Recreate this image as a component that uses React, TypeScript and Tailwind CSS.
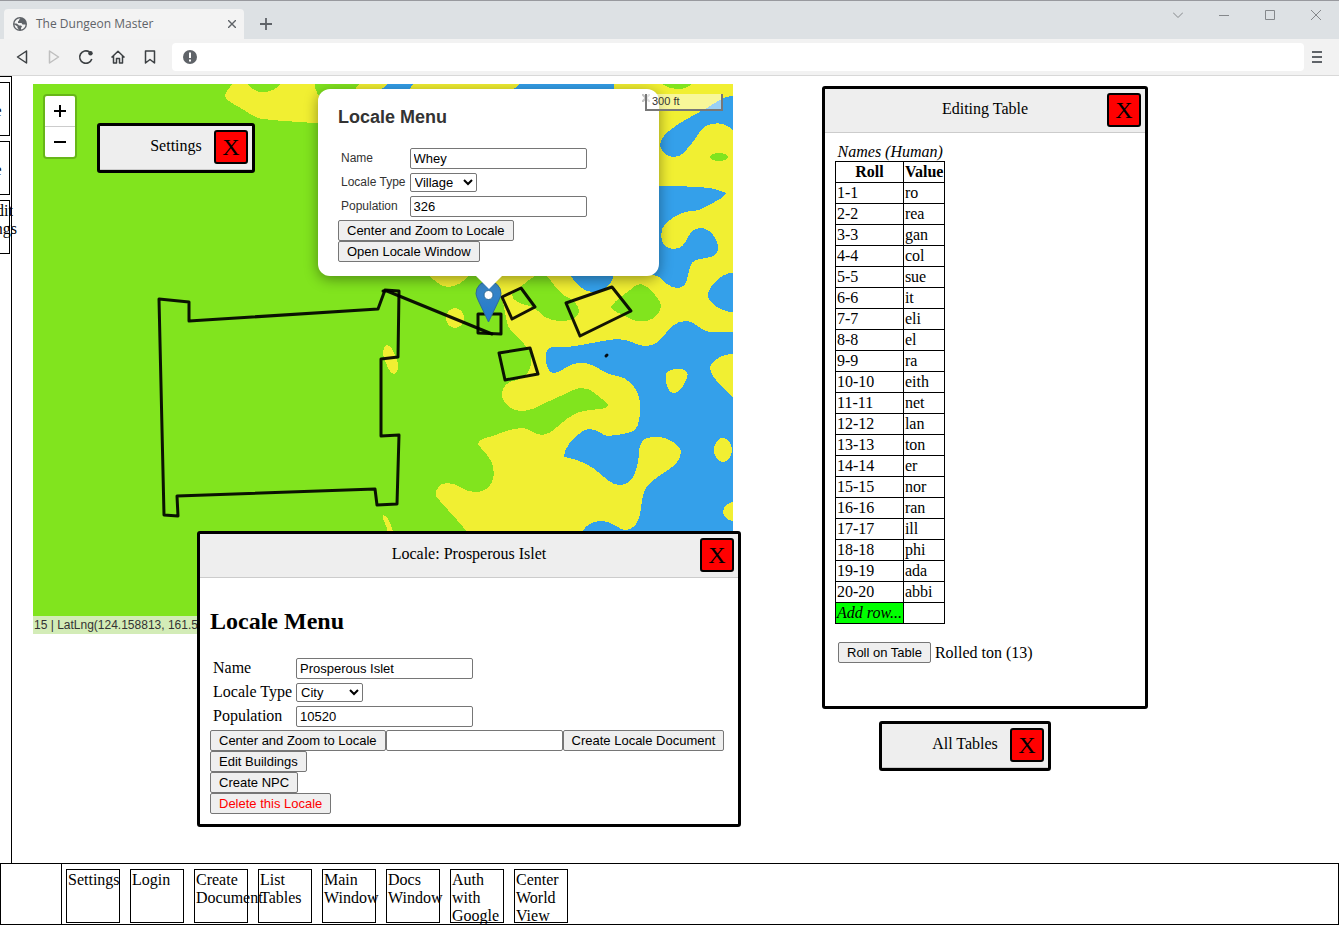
import type { ReactNode } from "react";
import clsx from "clsx";

const SANS = "font-['Liberation_Sans',Arial,sans-serif]";
const SERIF = "font-['Liberation_Serif','Times_New_Roman',serif]";

const tableRows = ["ro", "rea", "gan", "col", "sue", "it", "eli", "el", "ra", "eith", "net", "lan", "ton", "er", "nor", "ran", "ill", "phi", "ada", "abbi"];

const bottomButtons = ["Settings", "Login", "Create Document", "List Tables", "Main Window", "Docs Window", "Auth with Google", "Center World View"];

/* ---------- form controls ---------- */

function Button({ children, danger = false }: { children: ReactNode; danger?: boolean }) {
  return (
    <button
      type="button"
      className={clsx(
        "h-[21px] rounded-[2px] border border-[#767676] bg-[#efefef] px-2 text-[13px] leading-4 whitespace-nowrap",
        SANS,
        danger ? "text-[#f00]" : "text-black",
      )}
    >
      {children}
    </button>
  );
}

function TextBox({ id, value, label }: { id: string; value: string; label?: string }) {
  return (
    <input
      id={id}
      type="text"
      aria-label={label}
      defaultValue={value}
      className={clsx("block h-[21px] w-[177px] rounded-[2px] border border-[#767676] bg-white px-[3px] text-[13px] text-black", SANS)}
    />
  );
}

interface LocaleFormProps {
  id: string;
  name: string;
  type: string;
  population: string;
}

function LocaleForm({ id, name, type, population }: LocaleFormProps) {
  return (
    <div className="grid grid-cols-[max-content_max-content] auto-rows-[24px] items-center gap-x-1 pl-[3px]">
      <label htmlFor={id + "-name"}>Name</label>
      <TextBox id={id + "-name"} value={name} />
      <label htmlFor={id + "-type"}>Locale Type</label>
      <select
        id={id + "-type"}
        defaultValue={type}
        className={clsx("h-[19px] w-[67px] rounded-[2px] border border-[#767676] bg-white text-[13px] text-black", SANS)}
      >
        <option>City</option>
        <option>Town</option>
        <option>Village</option>
      </select>
      <label htmlFor={id + "-pop"}>Population</label>
      <TextBox id={id + "-pop"} value={population} />
    </div>
  );
}

/* ---------- windows ---------- */

function Window({ title, className, children }: { title: string; className: string; children?: ReactNode }) {
  return (
    <section className={clsx("absolute rounded-[3px] border-[3px] border-black bg-white text-base leading-[18px]", className)}>
      <header className="grid h-11 grid-cols-[34px_1fr_34px] items-start border-b border-[#ccc] bg-[#eee] px-1 pt-1">
        <h1 className="col-start-2 pt-[7px] text-center whitespace-nowrap">{title}</h1>
        <button type="button" aria-label={"Close " + title} className="h-[34px] w-[34px] rounded-[3px] border-2 border-black bg-[#f00] text-2xl leading-none">
          X
        </button>
      </header>
      {children}
    </section>
  );
}

function LocaleWindow() {
  return (
    <Window title="Locale: Prosperous Islet" className="top-[455px] left-[197px] w-[544px]">
      <div className="px-[10px] pt-[30px] pb-[10px]">
        <h2 className="mb-[21px] text-2xl leading-[27px] font-bold">Locale Menu</h2>
        <LocaleForm id="islet" name="Prosperous Islet" type="City" population="10520" />
        <div className="mt-[2px] flex flex-col items-start">
          <div className="flex">
            <Button>Center and Zoom to Locale</Button>
            <TextBox id="islet-doc" value="" label="Document name" />
            <Button>Create Locale Document</Button>
          </div>
          <Button>Edit Buildings</Button>
          <Button>Create NPC</Button>
          <Button danger>Delete this Locale</Button>
        </div>
      </div>
    </Window>
  );
}

function TableWindow() {
  return (
    <Window title="Editing Table" className="top-[10px] left-[822px] w-[326px]">
      <div className="px-[10px] pt-[10px] pb-[43px]">
        <table className="border-collapse">
          <caption className="text-center whitespace-nowrap italic">Names (Human)</caption>
          <thead>
            <tr className="h-[21px]">
              <th className="border border-black px-px">Roll</th>
              <th className="border border-black px-px">Value</th>
            </tr>
          </thead>
          <tbody>
            {tableRows.map((value, i) => (
              <tr key={value} className="h-[21px]">
                <td className="border border-black px-px">{`${i + 1}-${i + 1}`}</td>
                <td className="border border-black px-px">{value}</td>
              </tr>
            ))}
            <tr className="h-[21px]">
              <td className="border border-black bg-[#0f0] px-px whitespace-nowrap italic">Add row...</td>
              <td className="border border-black" />
            </tr>
          </tbody>
        </table>
        <div className="mt-[18px] flex items-center gap-1 pl-[3px]">
          <Button>Roll on Table</Button>
          <span>Rolled ton (13)</span>
        </div>
      </div>
    </Window>
  );
}

/* ---------- map ---------- */

function Terrain() {
  return (
    <svg viewBox="33 84 700 550" className="block h-full w-full">
      <defs>
        <linearGradient id="pin" x1="0" y1="0" x2="0" y2="1">
          <stop offset="0" stopColor="#3d88c4" />
          <stop offset="1" stopColor="#2078cf" />
        </linearGradient>
      </defs>
      <rect x="33" y="84" width="700" height="550" fill="#81e41e" />
      <g shapeRendering="crispEdges">
        {/* sand */}
        <g fill="#f1ef32">
          <path d="M232 84C229 89 225 92 225 96C225 101 240 107 247 112C252 115 257 119 263 119C280 121 300 122 330 124L420 265C430 276 438 287 448 287C457 287 464 281 468 276L490 276L496 290C504 298 504 310 507 322C508 328 511 331 513 333C518 338 524 343 526 347C533 352 532 360 530 368C528 375 520 380 513 381C505 383 502 389 502 395C502 403 512 411 522 411C530 411 537 407 543 404L567 393C573 390 578 388 582 388C592 388 597 396 607 403C610 407 604 409 600 409C587 410 580 411 573 415C560 422 553 434 542 435C535 435 530 428 522 428C510 429 500 433 493 436C484 438 478 440 478 444C482 450 488 455 491 461C494 468 495 474 492 482C488 490 482 492 475 492C463 492 458 483 447 483C439 483 435 490 436 496C440 502 458 520 467 532L740 560V84Z" />
          <ellipse cx="455" cy="318" rx="9" ry="10" />
          <path d="M387 345C383 347 382 354 384 358C387 366 390 374 394 374C398 373 399 367 398 363C395 355 392 345 387 345Z" />
          <path d="M383 515C381 518 388 526 388 534H394C391 525 388 515 383 515Z" />
        </g>
        {/* grass */}
        <g fill="#81e41e">
          <path d="M247 84C252 90 257 92 263 92C271 92 276 89 280 84Z" />
          <path d="M315 84C314 89 319 98 325 104L353 92L359 84Z" />
          <path d="M662 84C668 88 674 89 679 89C684 89 688 87 692 84Z" />
          <ellipse cx="719" cy="157" rx="9" ry="4" />
          <path d="M535 276C528 280 515 291 512 295C512 300 520 304 526 305C534 306 540 313 545 317C551 320 558 322 565 321C573 320 580 315 579 311C578 303 572 299 565 296C558 292 551 280 547 276Z" />
          <path d="M611 307C615 300 625 294 630 290C635 285 640 283 643 285C650 287 656 296 660 302C663 307 659 314 654 318C646 323 635 322 629 318C622 314 613 312 611 307Z" />
        </g>
        {/* water */}
        <g fill="#34a0ea">
          <path d="M388 84L378 92H408L413 84Z" />
          <path d="M520 84L510 92H614V84Z" />
          <path d="M733 96C724 96 720 100 715 103C704 110 690 117 680 123C670 130 660 136 660 145C661 153 668 157 674 157C682 157 685 151 692 143C697 138 699 130 706 126C714 122 725 122 733 130Z" />
          <path d="M640 185C670 186 690 186 710 188C718 190 726 192 726 194C722 199 712 203 705 207C697 213 692 209 682 213C670 218 661 225 661 235C661 245 667 249 674 249C690 248 685 229 700 228C711 228 718 240 718 248C718 259 706 257 696 260C690 262 690 268 688 275C687 284 683 288 678 288C670 288 664 282 659 277L640 270Z" />
          <path d="M570 275C576 283 583 292 592 292C602 292 611 288 614 275Z" />
          <path d="M733 273C722 272 708 287 708 295C708 303 722 312 733 312Z" />
          <path d="M546 360C545 351 547 347 555 347C574 349 594 341 617 339C630 339 637 346 645 346C664 347 666 322 685 321C696 321 700 332 713 332H733V540H578C582 528 590 521 600 521C614 521 618 530 626 530C645 527 638 502 646 488C655 474 681 468 681 452C680 444 667 437 657 437C646 437 640 439 639 452C638 468 634 485 620 485C604 485 600 463 565 457C561 456 570 438 583 431C595 425 600 435 608 436C617 435 627 434 634 431C640 425 640 415 640 405C640 390 630 382 624 378C617 375 610 376 601 370C595 366 590 363 581 363C567 363 562 373 553 373C549 373 546 366 546 360Z" />
        </g>
        {/* islands */}
        <g fill="#f1ef32">
          <path d="M666 373C670 369 675 369 680 369C686 369 689 373 687 378C684 385 680 393 674 393C667 393 665 380 666 373Z" />
          <path d="M733 354C724 354 710 360 710 369C711 378 724 388 733 397Z" />
          <ellipse cx="723" cy="450" rx="9" ry="12" />
          <path d="M733 502C727 503 723 508 723 512C723 516 728 521 733 521Z" />
        </g>
      </g>
      {/* town walls and buildings */}
      <g fill="none" stroke="#000" strokeOpacity=".92" strokeWidth="3" strokeLinejoin="round" strokeLinecap="round">
        <path d="M159 299L189 302V321L378 309L385 290L399 291L398 357L381 359V436L399 435L397 504L377 505L375 489L177 496L178 516L164 515Z" />
        <path d="M383 291L387 291L492 334" />
        <path d="M478 314H501V334L478 333Z" />
        <path d="M502 297L521 288L535 307L512 319Z" />
        <path d="M566 303L612 287L631 311L580 336Z" />
        <path d="M499 353L530 348L538 374L505 380Z" />
        <path d="M606 356L607 355" />
      </g>
      <path d="M488.500 322L478.500 301Q476 296 476 293.500A12.500 12.500 0 0 1 501 293.500Q501 296 498.500 301Z" fill="url(#pin)" stroke="#2e6c97" strokeWidth="1" />
      <circle cx="488.500" cy="295" r="4.500" fill="#fff" stroke="#2e6c97" strokeWidth="1" />
    </svg>
  );
}

function MapView() {
  return (
    <div className={clsx("absolute top-2 left-[33px] h-[550px] w-[700px] overflow-hidden text-[#333]", SANS)}>
      <Terrain />

      <div className="absolute top-[10px] left-[10px] rounded-[4px] border-2 border-black/20">
        <div className="flex w-[30px] flex-col overflow-hidden rounded-[2px] bg-white text-black">
          <button type="button" aria-label="Zoom in" className="flex h-[31px] items-center justify-center border-b border-[#ccc]">
            <svg viewBox="0 0 12 12" className="h-3 w-3" stroke="currentColor" strokeWidth="2"><path d="M6 0V12M0 6H12" /></svg>
          </button>
          <button type="button" aria-label="Zoom out" className="flex h-[30px] items-center justify-center">
            <svg viewBox="0 0 12 12" className="h-3 w-3" stroke="currentColor" strokeWidth="2"><path d="M0 6H12" /></svg>
          </button>
        </div>
      </div>

      <div className="absolute top-[5px] left-[285px] w-[341px]">
        <div className="relative rounded-xl bg-white px-5 pt-4 pb-[14px] text-xs shadow-[0_3px_14px_rgba(0,0,0,0.4)]">
          <button type="button" aria-label="Close popup" className="absolute top-[5px] right-[9px] text-[#c3c3c3]">
            <svg viewBox="0 0 8 8" className="h-2 w-2" stroke="currentColor" strokeWidth="2.200"><path d="M0 0L8 8M8 0L0 8" /></svg>
          </button>
          <h2 className="mb-[17px] text-lg leading-6 font-bold">Locale Menu</h2>
          <LocaleForm id="whey" name="Whey" type="Village" population="326" />
          <div className="mt-[2px] flex flex-col items-start">
            <Button>Center and Zoom to Locale</Button>
            <Button>Open Locale Window</Button>
          </div>
        </div>
        <svg viewBox="0 0 26 13" className="relative mx-auto block h-[13px] w-[26px]">
          <path d="M0 0H26L13 13Z" fill="#fff" />
        </svg>
      </div>

      <div className="absolute top-[10px] right-[10px] w-[78px] border-2 border-t-0 border-[#777] bg-white/50 px-[5px] text-[11px] leading-[15px]">300 ft</div>
      <div className="absolute bottom-0 left-0 bg-[#d3ecb7] px-px text-xs leading-[18px] whitespace-nowrap">15 | LatLng(124.158813, 161.542969)</div>
    </div>
  );
}

/* ---------- browser frame ---------- */

function BrowserFrame() {
  return (
    <div className="text-[#5f6368]">
      <div className="flex h-[39px] items-end border-t border-[#98999e] bg-[#dde1e4]">
        <div className="ml-1 flex h-[30px] w-60 items-center rounded-t-[4px] bg-[#f3f3f3] pr-2 pl-[9px]">
          <svg viewBox="0 0 14 14" className="mr-[9px] h-[14px] w-[14px]">
            <circle cx="7" cy="7" r="7" fill="#5f6368" />
            <path d="M7.500 1.500C6 2 6.500 3.500 5 4.500V6H8.500L9.500 7.500H12.500C12.500 10 10.500 12.300 8 12.500V11L9 9.500L8 8.500H6L5 7.500L3.500 6.500H1.500C1.700 3.500 4.500 1.200 7.500 1.500ZM1.500 7.500L4.500 9.500V11L6 12.500C3.500 12.200 1.600 10.200 1.500 7.500Z" fill="#f3f3f3" />
          </svg>
          <span className="flex-1 font-['Open_Sans','Noto_Sans',sans-serif] text-xs">The Dungeon Master</span>
          <button type="button" aria-label="Close tab">
            <svg viewBox="0 0 8 8" className="h-2 w-2" stroke="currentColor" strokeWidth="1.400"><path d="M0 0L8 8M8 0L0 8" /></svg>
          </button>
        </div>
        <button type="button" aria-label="New tab" className="mb-[9px] ml-4">
          <svg viewBox="0 0 12 12" className="h-3 w-3" stroke="currentColor" strokeWidth="1.800"><path d="M6 0V12M0 6H12" /></svg>
        </button>
        <div className="mr-[18px] mb-[19px] ml-auto flex gap-9 text-[#85888b]">
          <button type="button" aria-label="Tab list"><svg viewBox="0 0 10 10" className="h-[10px] w-[10px]" fill="none" stroke="currentColor"><path d="M0 2.500L5 7.500L10 2.500" /></svg></button>
          <button type="button" aria-label="Minimize"><svg viewBox="0 0 10 10" className="h-[10px] w-[10px]" stroke="currentColor"><path d="M0 5.500H10" /></svg></button>
          <button type="button" aria-label="Maximize"><svg viewBox="0 0 10 10" className="h-[10px] w-[10px]" fill="none" stroke="currentColor"><path d="M.5.500H9.500V9.500H.5Z" /></svg></button>
          <button type="button" aria-label="Close"><svg viewBox="0 0 10 10" className="h-[10px] w-[10px]" stroke="currentColor"><path d="M0 0L10 10M10 0L0 10" /></svg></button>
        </div>
      </div>
      <div className="flex h-[37px] items-center border-b border-[#d8d8d8] bg-[#f2f2f2] pr-[17px] pl-[14px]">
        <div className="flex gap-4 text-[#3c4043]">
          <button type="button" aria-label="Back"><svg viewBox="0 0 16 16" className="h-4 w-4" fill="none" stroke="currentColor" strokeWidth="1.500" strokeLinejoin="round"><path d="M12.500 2V14L3.500 8Z" /></svg></button>
          <button type="button" aria-label="Forward" className="text-[#bfbfbf]"><svg viewBox="0 0 16 16" className="h-4 w-4" fill="none" stroke="currentColor" strokeWidth="1.500" strokeLinejoin="round"><path d="M3.500 2V14L12.500 8Z" /></svg></button>
          <button type="button" aria-label="Reload">
            <svg viewBox="0 0 16 16" className="h-4 w-4" fill="none" stroke="currentColor" strokeWidth="1.600">
              <path d="M13.800 10A6.200 6.200 0 1 1 11.500 3" />
              <circle cx="12.500" cy="4.300" r="2.200" fill="currentColor" stroke="none" />
            </svg>
          </button>
          <button type="button" aria-label="Home">
            <svg viewBox="0 0 16 16" className="h-4 w-4" fill="none" stroke="currentColor" strokeWidth="1.500" strokeLinejoin="round">
              <path d="M1.500 8.500L8 2.300L14.500 8.500M3.500 7V14H6.500V9.500H9.500V14H12.500V7" />
            </svg>
          </button>
          <button type="button" aria-label="Bookmark"><svg viewBox="0 0 16 16" className="h-4 w-4" fill="none" stroke="currentColor" strokeWidth="1.500" strokeLinejoin="round"><path d="M3.500 2H12.500V14L8 10.500L3.500 14Z" /></svg></button>
        </div>
        <div className="ml-[14px] flex h-7 flex-1 items-center rounded-[4px] bg-white pl-[11px]">
          <svg viewBox="0 0 14 14" className="h-[14px] w-[14px]">
            <circle cx="7" cy="7" r="7" fill="#5f6368" />
            <path d="M6 2.500H8V8H6ZM6 9.500H8V11.500H6Z" fill="#fff" />
          </svg>
          <input aria-label="Address" className="ml-2 flex-1 outline-none" />
        </div>
        <button type="button" aria-label="Menu" className="ml-2">
          <svg viewBox="0 0 10 12" className="h-3 w-[10px]" stroke="currentColor" strokeWidth="2"><path d="M0 1H10M0 6H10M0 11H10" /></svg>
        </button>
      </div>
    </div>
  );
}

const DockButton = ({ children }: { children: ReactNode }) => (
  <button type="button" className="block h-[54px] w-[54px] shrink-0 border border-black px-px pt-px text-left leading-[18px]">
    <span className="block h-[51px]">{children}</span>
  </button>
);

export default function App() {
  return (
    <div className={clsx("flex min-h-screen flex-col bg-white text-base text-black", SERIF)}>
      <BrowserFrame />

      <main className="relative flex flex-1 overflow-hidden">
        {/* drawer, mostly tucked behind the left edge */}
        <nav className="-ml-[50px] flex w-[62px] flex-col gap-[5px] border border-b-0 border-black p-[5px]">
          <DockButton>New Locale</DockButton>
          <DockButton>New Locale</DockButton>
          <DockButton>
            <span className="-mr-[9px] block text-right whitespace-pre">{"Edit \nSettings"}</span>
          </DockButton>
        </nav>

        <MapView />
        <Window title="Settings" className="top-[47px] left-[97px] w-[158px]" />
        <LocaleWindow />
        <TableWindow />
        <Window title="All Tables" className="top-[645px] left-[879px] w-[172px]" />
      </main>

      <footer className="flex h-[62px] border border-black">
        <div className="w-[61px] border-r border-black" />
        <nav className="flex gap-[10px] pt-[5px] pl-1">
          {bottomButtons.map((label) => (
            <DockButton key={label}>{label}</DockButton>
          ))}
        </nav>
      </footer>
    </div>
  );
}
